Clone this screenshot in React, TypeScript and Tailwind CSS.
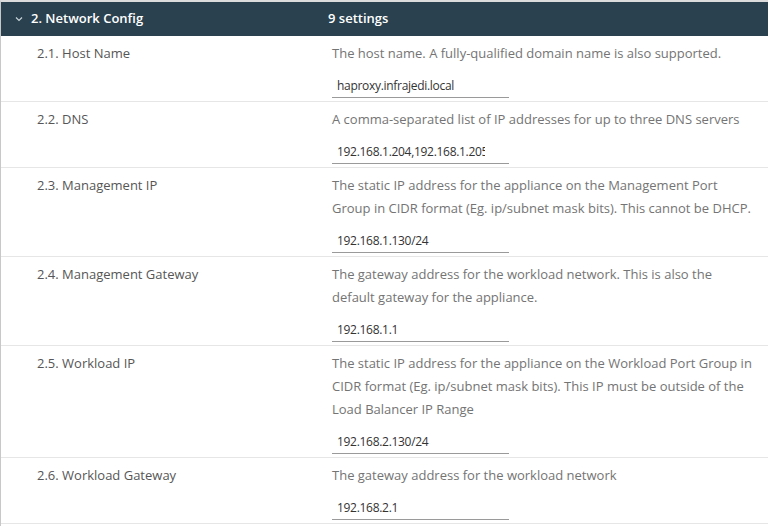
import React from "react";

type Setting = {
  label: string;
  desc: string[];
  value: string;
};

const settings: Setting[] = [
  {
    label: "2.1. Host Name",
    desc: ["The host name. A fully-qualified domain name is also supported."],
    value: "haproxy.infrajedi.local",
  },
  {
    label: "2.2. DNS",
    desc: ["A comma-separated list of IP addresses for up to three DNS servers"],
    value: "192.168.1.204,192.168.1.205",
  },
  {
    label: "2.3. Management IP",
    desc: [
      "The static IP address for the appliance on the Management Port",
      "Group in CIDR format (Eg. ip/subnet mask bits). This cannot be DHCP.",
    ],
    value: "192.168.1.130/24",
  },
  {
    label: "2.4. Management Gateway",
    desc: [
      "The gateway address for the workload network. This is also the",
      "default gateway for the appliance.",
    ],
    value: "192.168.1.1",
  },
  {
    label: "2.5. Workload IP",
    desc: [
      "The static IP address for the appliance on the Workload Port Group in",
      "CIDR format (Eg. ip/subnet mask bits). This IP must be outside of the",
      "Load Balancer IP Range",
    ],
    value: "192.168.2.130/24",
  },
  {
    label: "2.6. Workload Gateway",
    desc: ["The gateway address for the workload network"],
    value: "192.168.2.1",
  },
];

const Row = ({ s }: { s: Setting }) => {
  return (
    <div className="grid grid-cols-[331px_1fr] border-b border-[#e6e6e6] pt-[6px] pb-[3px]">
      <div className="pl-[36px] leading-[23px] text-[#565656]">{s.label}</div>
      <div>
        <div className="leading-[23px] text-[#747474] whitespace-nowrap">
          {s.desc.map((line) => (
            <div key={line}>{line}</div>
          ))}
        </div>
        <div className="mt-[9px] w-[177px] h-[24px] border-b border-[#9a9a9a] pl-[5px] pr-[24px]">
          <div className="overflow-hidden whitespace-nowrap leading-[23px] text-[12px] tracking-[-0.3px] text-[#333333]">
            {s.value}
          </div>
        </div>
      </div>
    </div>
  );
};

export default function App() {
  return (
    <div
      className="w-[768px] h-[526px] overflow-hidden bg-white border-t-2 border-l border-t-[#dcdcdc] border-l-[#c8c8c8] text-[13px]"
      style={{ fontFamily: '"Open Sans", "Noto Sans", sans-serif' }}
    >
      <div className="h-[34px] bg-[#2a414f] grid grid-cols-[327px_1fr] items-center text-white font-semibold">
        <div className="flex items-center pl-[13px]">
          <svg width="10" height="10" viewBox="0 0 10 10" className="mr-[7px]">
            <path d="M2 3.5 L5 6.5 L8 3.5" fill="none" stroke="#c9d3d9" strokeWidth="1.2" />
          </svg>
          <span>2. Network Config</span>
        </div>
        <div>9 settings</div>
      </div>
      {settings.map((s) => (
        <Row key={s.label} s={s} />
      ))}
    </div>
  );
}
